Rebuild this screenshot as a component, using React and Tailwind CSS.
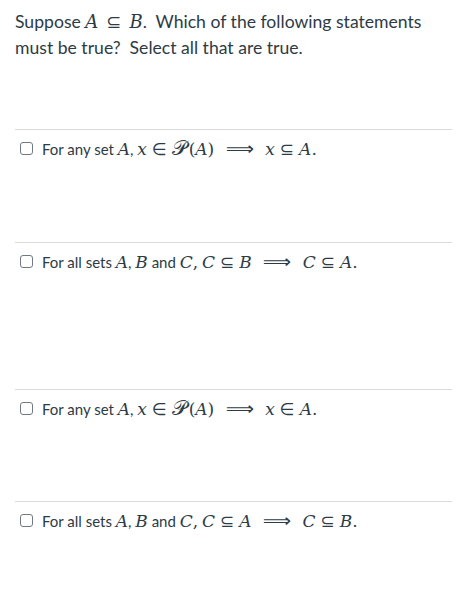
import React from "react";

const I = ({ children, s = "text-[17px]" }) => (
  <span className={`font-['DejaVu_Serif',serif] italic ${s}`}>{children}</span>
);
const R = ({ children, className = "" }) => (
  <span className={`font-['DejaVu_Serif',serif] text-[17px] ${className}`}>{children}</span>
);
const Rel = ({ children }) => (
  <span className="font-['DejaVu_Sans',serif] text-[17px] mx-[5px]">{children}</span>
);
const Scr = () => (
  <span className="font-['DejaVu_Sans','Noto_Sans',serif] text-[21px] mr-[2px] leading-none">𝒫</span>
);
const Implies = () => (
  <span className="inline-block w-[29px] mx-[11px] text-center align-baseline">
    <span className="inline-block font-['DejaVu_Sans',serif] text-[18px] scale-x-[1.1]">⟹</span>
  </span>
);

const Box = () => (
  <span className="inline-block w-[13px] h-[13px] border border-[#6f7a82] rounded-[3px] bg-white mr-[9px] shrink-0" />
);

const Item = ({ h, children }) => (
  <div className={`border-t border-[#d7dbde] ${h}`}>
    <div className="flex items-center h-[37px] pl-[5px] text-[15px] text-[#2d3b45] whitespace-nowrap">
      <Box />
      <div>{children}</div>
    </div>
  </div>
);

export default function App() {
  return (
    <div className="w-[458px] h-[610px] bg-white pl-[15px] pr-[6px] font-['Lato','Noto_Sans',sans-serif] text-[#2d3b45] overflow-hidden">
      <p className="pt-[9px] text-[17.6px] leading-[26px] h-[129px] whitespace-nowrap">
        Suppose <I s="text-[18px]">A</I>
        <span className="font-['DejaVu_Sans',serif] text-[18px] mx-[8px]">⊆</span>
        <I s="text-[18px]">B</I>.&nbsp; Which of the following statements
        <br />
        must be true?&nbsp; Select all that are true.
      </p>
      <Item h="h-[113px]">
        For any set <I>A</I>, <I>x</I><Rel>∈</Rel><Scr />
        <R>(</R><I>A</I><R>)</R>
        <Implies />
        <I>x</I><Rel>⊆</Rel><I>A</I><R>.</R>
      </Item>
      <Item h="h-[147px]">
        For all sets <I>A</I>, <I>B</I> and <I>C</I><R>,</R> <I>C</I><Rel>⊆</Rel><I>B</I>
        <Implies />
        <I>C</I><Rel>⊆</Rel><I>A</I><R>.</R>
      </Item>
      <Item h="h-[112px]">
        For any set <I>A</I>, <I>x</I><Rel>∈</Rel><Scr />
        <R>(</R><I>A</I><R>)</R>
        <Implies />
        <I>x</I><Rel>∈</Rel><I>A</I><R>.</R>
      </Item>
      <Item h="h-[110px]">
        For all sets <I>A</I>, <I>B</I> and <I>C</I><R>,</R> <I>C</I><Rel>⊆</Rel><I>A</I>
        <Implies />
        <I>C</I><Rel>⊆</Rel><I>B</I><R>.</R>
      </Item>
    </div>
  );
}
